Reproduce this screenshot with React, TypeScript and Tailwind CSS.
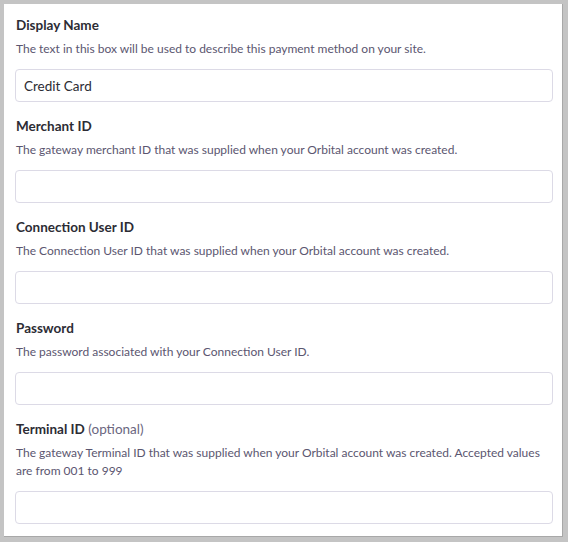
const fields = [
  {
    label: "Display Name",
    description: "The text in this box will be used to describe this payment method on your site.",
    value: "Credit Card",
  },
  {
    label: "Merchant ID",
    description: "The gateway merchant ID that was supplied when your Orbital account was created.",
    value: "",
  },
  {
    label: "Connection User ID",
    description: "The Connection User ID that was supplied when your Orbital account was created.",
    value: "",
  },
  {
    label: "Password",
    description: "The password associated with your Connection User ID.",
    value: "",
  },
  {
    label: "Terminal ID",
    optional: true,
    description:
      "The gateway Terminal ID that was supplied when your Orbital account was created. Accepted values are from 001 to 999",
    value: "",
  },
];

export default function App() {
  return (
    <div className="w-[568px] h-[542px] bg-[#c4c4c4] pt-[4px] pl-[4px] font-['Lato',sans-serif]">
      <div className="w-[559px] h-[533px] bg-white border-r border-b border-[#a8a8a8] pt-[11px] pl-[11px] pr-[9px]">
        {fields.map((f, i) => (
          <div key={i} className={i > 0 ? "mt-[14px]" : ""}>
            <label className="block text-[13.5px] leading-[20px] font-bold text-[#2c2c34] pl-[1px] mb-[5px]">
              {f.label}
              {f.optional && <span className="font-normal text-[#6b6680]"> (optional)</span>}
            </label>
            <p className="text-[12px] leading-[18px] text-[#5b5670] pl-[1px] mb-[11px]">{f.description}</p>
            <input
              type="text"
              defaultValue={f.value}
              className="block w-full h-[33px] rounded-[4px] border border-[#dcdae6] px-[8px] text-[13.5px] text-[#2c2c34] outline-none"
            />
          </div>
        ))}
      </div>
    </div>
  );
}
